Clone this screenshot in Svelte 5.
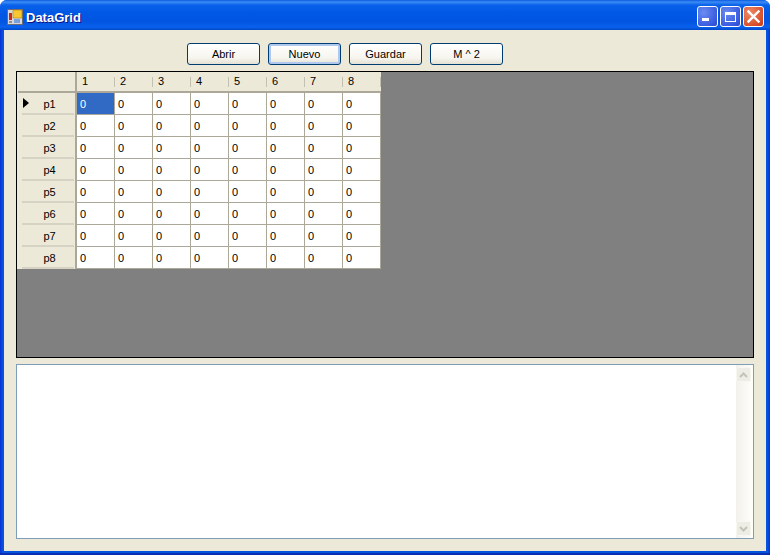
<script>
  const buttons = ["Abrir", "Nuevo", "Guardar", "M ^ 2"];
  const cols = [1, 2, 3, 4, 5, 6, 7, 8];
</script>

<div class="window">
  <header class="titlebar">
    <svg class="appicon" width="16" height="16" viewBox="0 0 16 16">
      <rect x="0.5" y="0.5" width="15" height="15" fill="#d8d8d8" stroke="#6a6a78" />
      <rect x="6" y="1" width="9" height="8" fill="#f8c830" stroke="#b08010" stroke-width="0.6" />
      <rect x="2" y="4" width="3" height="7" fill="#d02818" />
      <rect x="7" y="10" width="6" height="4" fill="#7aa0e0" />
      <rect x="2" y="12" width="3" height="2" fill="#8890a0" />
    </svg>
    <span class="title">DataGrid</span>
    <div class="controls">
      <div class="ctl">
        <span class="min"></span>
      </div>
      <div class="ctl">
        <span class="max"></span>
      </div>
      <div class="ctl close">
        <svg width="13" height="13" viewBox="0 0 13 13">
          <path d="M1.5 1.5 L11.5 11.5 M11.5 1.5 L1.5 11.5" stroke="#fff" stroke-width="2.4" stroke-linecap="square" />
        </svg>
      </div>
    </div>
  </header>

  <main class="body">
    <div class="toolbar">
      {#each buttons as label}
        <button class:focus={label === "Nuevo"}>{label}</button>
      {/each}
    </div>

    <div class="grid">
      <div class="table">
        <div class="row head">
          <div class="corner"></div>
          {#each cols as c}
            <div class="colhead">{c}</div>
          {/each}
        </div>
        {#each cols as r}
          <div class="row">
            <div class="rowhead">
              {#if r === 1}<span class="arrow"></span>{/if}
              p{r}
            </div>
            {#each cols as c}
              <div class="cell" class:selected={r === 1 && c === 1}>0</div>
            {/each}
          </div>
        {/each}
      </div>
    </div>

    <div class="textbox">
      <div class="scrollbar">
        <div class="sbtn">
          <svg width="9" height="6" viewBox="0 0 9 6"><path d="M1 5 L4.5 1.5 L8 5" fill="none" stroke="#c3c3b8" stroke-width="2" /></svg>
        </div>
        <div class="track"></div>
        <div class="sbtn">
          <svg width="9" height="6" viewBox="0 0 9 6"><path d="M1 1 L4.5 4.5 L8 1" fill="none" stroke="#c3c3b8" stroke-width="2" /></svg>
        </div>
      </div>
    </div>
  </main>
</div>

<style>
  :global(body) {
    margin: 0;
    background: #fff;
  }

  .window {
    width: 770px;
    height: 555px;
    box-sizing: border-box;
    display: flex;
    flex-direction: column;
    padding: 0 4px 4px;
    border-radius: 7px 7px 0 0;
    background: linear-gradient(90deg, #0831d9 0, #0855dd 3px, #0855dd 767px, #0831d9 770px);
    box-shadow: inset 0 -2px 0 #0a2fb0;
    font-family: "Liberation Sans", Arial, sans-serif;
    font-size: 11px;
    color: #000;
    overflow: hidden;
  }

  .titlebar {
    height: 30px;
    margin: 0 -4px;
    padding: 3px 6px 0 7px;
    display: flex;
    align-items: center;
    box-sizing: border-box;
    background: linear-gradient(180deg, #0a5ae0 0, #3c8cf5 2px, #0a62ea 5px, #0058e6 12px, #0255e0 22px, #0a62ee 27px, #0048c8 30px);
  }

  .appicon {
    margin-right: 3px;
  }

  .title {
    margin-top: 1px;
    color: #fff;
    font-weight: 700;
    font-size: 13px;
    text-shadow: 1px 1px 0 #0f1089;
  }

  .controls {
    margin-left: auto;
    display: flex;
    gap: 2px;
  }

  .ctl {
    width: 21px;
    height: 21px;
    box-sizing: border-box;
    border: 1px solid #fff;
    border-radius: 3px;
    background: radial-gradient(circle at 30% 30%, #6a8cf0, #3a5ce0 70%, #2a48c8);
    position: relative;
    display: flex;
    align-items: center;
    justify-content: center;
  }

  .ctl.close {
    background: radial-gradient(circle at 30% 30%, #ee8a68, #d8502c 70%, #c03c1c);
  }

  .min {
    width: 7px;
    height: 3px;
    background: #fff;
    position: absolute;
    left: 4px;
    bottom: 5px;
  }

  .max {
    width: 11px;
    height: 10px;
    box-sizing: border-box;
    border: 1px solid #fff;
    border-top-width: 3px;
  }

  .body {
    flex: 1;
    background: #ece9d8;
    display: flex;
    flex-direction: column;
    padding: 13px 12px 12px;
  }

  .toolbar {
    display: flex;
    gap: 8px;
    margin-left: 171px;
    height: 22px;
    margin-bottom: 6px;
  }

  button {
    width: 73px;
    height: 22px;
    padding: 0;
    font: inherit;
    color: #000;
    background: linear-gradient(180deg, #fff 0, #f6f5ee 70%, #e4e1d4 100%);
    border: 1px solid #003c74;
    border-radius: 3px;
  }

  button.focus {
    box-shadow: inset 0 0 0 2px #b0c8ee;
  }

  .grid {
    height: 287px;
    box-sizing: border-box;
    border: 1px solid #000;
    background: #808080;
  }

  .table {
    width: 364px;
  }

  .row {
    display: flex;
    height: 22px;
    padding-left: 1px;
    background: #ece9d8;
  }

  .head {
    height: 21px;
  }

  .corner,
  .rowhead {
    width: 59px;
    box-sizing: border-box;
    background: #ece9d8;
    border-right: 2px solid #aca899;
    flex: none;
  }

  .corner {
    border-bottom: 2px solid #aca899;
  }

  .colhead {
    width: 38px;
    flex: none;
    box-sizing: border-box;
    background: #ece9d8;
    border-bottom: 2px solid #aca899;
    padding-left: 5px;
    line-height: 19px;
    position: relative;
  }

  .colhead::after {
    content: "";
    position: absolute;
    right: 0;
    top: 5px;
    height: 10px;
    width: 1px;
    background: #c4c1b2;
  }

  .rowhead {
    position: relative;
    text-align: center;
    line-height: 22px;
    padding-left: 6px;
  }

  .rowhead::after {
    content: "";
    position: absolute;
    left: 4px;
    right: 1px;
    bottom: 0;
    height: 2px;
    background: #d6d3c4;
  }

  .arrow {
    position: absolute;
    left: 5px;
    top: 5px;
    border-left: 6px solid #000;
    border-top: 5px solid transparent;
    border-bottom: 5px solid transparent;
  }

  .cell {
    width: 38px;
    flex: none;
    box-sizing: border-box;
    background: #fff;
    border-right: 1px solid #aca899;
    border-bottom: 1px solid #aca899;
    padding-left: 3px;
    line-height: 22px;
  }

  .cell.selected {
    background: #316ac5;
    color: #fff;
  }

  .textbox {
    margin-top: 6px;
    flex: 1;
    background: #fff;
    border: 1px solid #7f9db9;
    display: flex;
    justify-content: flex-end;
  }

  .scrollbar {
    width: 17px;
    display: flex;
    flex-direction: column;
    padding: 2px 0;
    box-sizing: border-box;
    background: linear-gradient(90deg, #f3f1ec, #fefefb);
  }

  .track {
    flex: 1;
  }

  .sbtn {
    height: 15px;
    width: 15px;
    box-sizing: border-box;
    background: #eeede5;
    border: 1px solid #f8f7f0;
    border-radius: 2px;
    display: flex;
    align-items: center;
    justify-content: center;
  }
</style>
